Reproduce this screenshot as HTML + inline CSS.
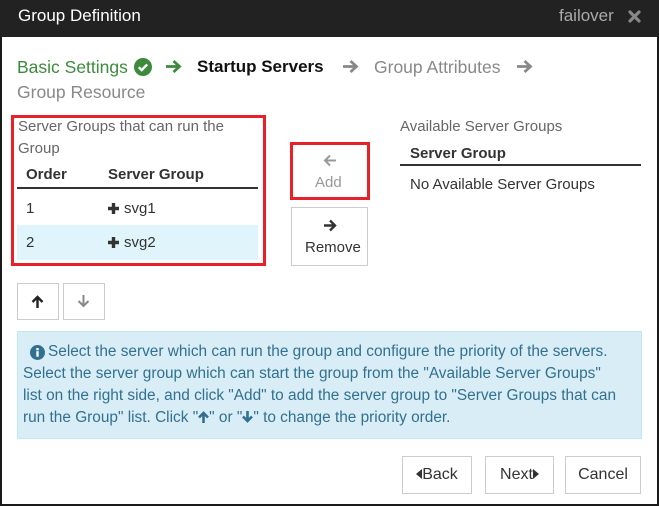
<!DOCTYPE html>
<html><head><style>
*{margin:0;padding:0;box-sizing:border-box}
body{width:659px;height:506px;background:#1a1a1a;font-family:"Liberation Sans",Arial,sans-serif;position:relative;overflow:hidden}
.win{position:absolute;left:2px;top:0;width:655px;height:504px;background:#fff}
.hd{position:absolute;left:0;top:0;width:659px;height:37px;background:#222}
.a{position:absolute;white-space:nowrap}
.btn{position:absolute;border:1px solid #ccc;background:#fff;text-align:center;color:#333;font-size:15px}
.red{position:absolute;border:3px solid #e8202a}
svg{display:inline-block}
</style></head><body>
<div class="win"></div>
<div class="hd"></div>
<div class="a" style="left:18px;top:6px;color:#fff;font-size:17px">Group Definition</div>
<div class="a" style="left:559px;top:6px;color:#aaa;font-size:17px">failover</div>
<svg class="a" style="left:628px;top:10px" width="13" height="13" viewBox="0 0 13 13"><path d="M2 2L11 11M11 2L2 11" stroke="#888" stroke-width="3.2" stroke-linecap="round"/></svg>

<div class="a" style="left:17px;top:57px;font-size:17.5px;color:#3c8b3c">Basic Settings</div>
<svg class="a" style="left:134px;top:58px" width="18" height="18" viewBox="0 0 18 18"><circle cx="9" cy="9" r="9" fill="#3c8b3c"/><path d="M4.8 9.3L7.7 12.1L13.2 6.4" stroke="#fff" stroke-width="2.4" fill="none"/></svg>
<svg class="a" style="left:165px;top:59px" width="17" height="15" viewBox="0 0 17 15"><path d="M1 7.5H14M8.5 2L14.5 7.5L8.5 13" stroke="#3c8b3c" stroke-width="2.8" fill="none"/></svg>
<div class="a" style="left:197px;top:57px;font-size:17px;color:#111;font-weight:bold">Startup Servers</div>
<svg class="a" style="left:342px;top:59px" width="17" height="15" viewBox="0 0 17 15"><path d="M1 7.5H14M8.5 2L14.5 7.5L8.5 13" stroke="#888" stroke-width="2.8" fill="none"/></svg>
<div class="a" style="left:374px;top:57px;font-size:17.5px;color:#888">Group Attributes</div>
<svg class="a" style="left:516px;top:59px" width="17" height="15" viewBox="0 0 17 15"><path d="M1 7.5H14M8.5 2L14.5 7.5L8.5 13" stroke="#888" stroke-width="2.8" fill="none"/></svg>
<div class="a" style="left:17px;top:82px;font-size:17.5px;color:#888">Group Resource</div>

<div class="a" style="left:18px;top:118px;font-size:15px;color:#666">Server Groups that can run the</div>
<div class="a" style="left:18px;top:140px;font-size:15px;color:#666">Group</div>
<div class="a" style="left:26px;top:166px;font-size:15px;color:#333;font-weight:bold">Order</div>
<div class="a" style="left:108px;top:166px;font-size:15px;color:#333;font-weight:bold">Server Group</div>
<div class="a" style="left:17px;top:187px;width:241px;height:2px;background:#333"></div>
<div class="a" style="left:26px;top:200px;font-size:15px;color:#333">1</div>
<svg class="a" style="left:107px;top:202px" width="13" height="13" viewBox="0 0 13 13"><path d="M6.5 1V12M1 6.5H12" stroke="#333" stroke-width="3.4"/></svg>
<div class="a" style="left:124px;top:200px;font-size:15px;color:#333">svg1</div>
<div class="a" style="left:17px;top:225px;width:241px;height:35px;background:#dff5fb"></div>
<div class="a" style="left:26px;top:234px;font-size:15px;color:#333">2</div>
<svg class="a" style="left:107px;top:236px" width="13" height="13" viewBox="0 0 13 13"><path d="M6.5 1V12M1 6.5H12" stroke="#333" stroke-width="3.4"/></svg>
<div class="a" style="left:124px;top:234px;font-size:15px;color:#333">svg2</div>
<div class="red" style="left:11px;top:115px;width:255px;height:151px"></div>

<svg class="a" style="left:323px;top:154px" width="14" height="13" viewBox="0 0 14 13"><path d="M13 6.5H2M7 1.5L2 6.5L7 11.5" stroke="#999" stroke-width="2" fill="none"/></svg>
<div class="a" style="left:315px;top:174px;font-size:15px;color:#999">Add</div>
<div class="red" style="left:290px;top:142px;width:80px;height:58px"></div>
<div class="btn" style="left:291px;top:207px;width:77px;height:59px"></div>
<svg class="a" style="left:323px;top:219px" width="14" height="13" viewBox="0 0 14 13"><path d="M1 6.5H12M7 1.5L12 6.5L7 11.5" stroke="#333" stroke-width="2.4" fill="none"/></svg>
<div class="a" style="left:305px;top:239px;font-size:15px;color:#333">Remove</div>

<div class="a" style="left:400px;top:118px;font-size:15px;color:#666">Available Server Groups</div>
<div class="a" style="left:410px;top:145px;font-size:15px;color:#333;font-weight:bold">Server Group</div>
<div class="a" style="left:400px;top:164px;width:241px;height:2px;background:#333"></div>
<div class="a" style="left:410px;top:176px;font-size:15px;color:#333">No Available Server Groups</div>

<div class="btn" style="left:17px;top:283px;width:42px;height:37px"></div>
<svg class="a" style="left:31px;top:295px" width="13" height="14" viewBox="0 0 13 14"><path d="M6.5 13V2M1.5 7L6.5 2L11.5 7" stroke="#222" stroke-width="2.4" fill="none"/></svg>
<div class="btn" style="left:63px;top:283px;width:42px;height:37px"></div>
<svg class="a" style="left:77px;top:294px" width="13" height="14" viewBox="0 0 13 14"><path d="M6.5 1V12M1.5 7L6.5 12L11.5 7" stroke="#888" stroke-width="2" fill="none"/></svg>

<div class="a" style="left:17px;top:331px;width:625px;height:108px;background:#d9edf7;border:1px solid #bce8f1"></div>
<svg class="a" style="left:30px;top:345px" width="15" height="15" viewBox="0 0 15 15"><circle cx="7.5" cy="7.5" r="7.5" fill="#31708f"/><rect x="6.3" y="6.2" width="2.4" height="5.5" fill="#fff"/><rect x="6.3" y="3" width="2.4" height="2.3" fill="#fff"/></svg>
<div class="a" style="left:23px;top:341px;font-size:15.4px;color:#31708f;line-height:22px"><span style="padding-left:25px">Select the server which can run the group and configure the priority of the servers.</span><br>Select the server group which can start the group from the "Available Server Groups"<br>list on the right side, and click "Add" to add the server group to "Server Groups that can<br>run the Group" list. Click "<svg width="11" height="12" viewBox="0 0 11 12" style="vertical-align:-1px"><path d="M5.5 12V2M1 6.5L5.5 2L10 6.5" stroke="#31708f" stroke-width="2.6" fill="none"/></svg>" or "<svg width="11" height="12" viewBox="0 0 11 12" style="vertical-align:-1px"><path d="M5.5 0V10M1 5.5L5.5 10L10 5.5" stroke="#31708f" stroke-width="2.6" fill="none"/></svg>" to change the priority order.</div>

<div class="btn" style="left:402px;top:456px;width:70px;height:38px;line-height:36px;font-size:16px"><svg width="6" height="10" viewBox="0 0 6 10" style="vertical-align:0"><path d="M6 0L0 5L6 10Z" fill="#333"/></svg>Back</div>
<div class="btn" style="left:485px;top:456px;width:69px;height:38px;line-height:36px;font-size:16px">Next<svg width="6" height="10" viewBox="0 0 6 10" style="vertical-align:0"><path d="M0 0L6 5L0 10Z" fill="#333"/></svg></div>
<div class="btn" style="left:565px;top:456px;width:76px;height:38px;line-height:36px;font-size:16px">Cancel</div>
</body></html>
